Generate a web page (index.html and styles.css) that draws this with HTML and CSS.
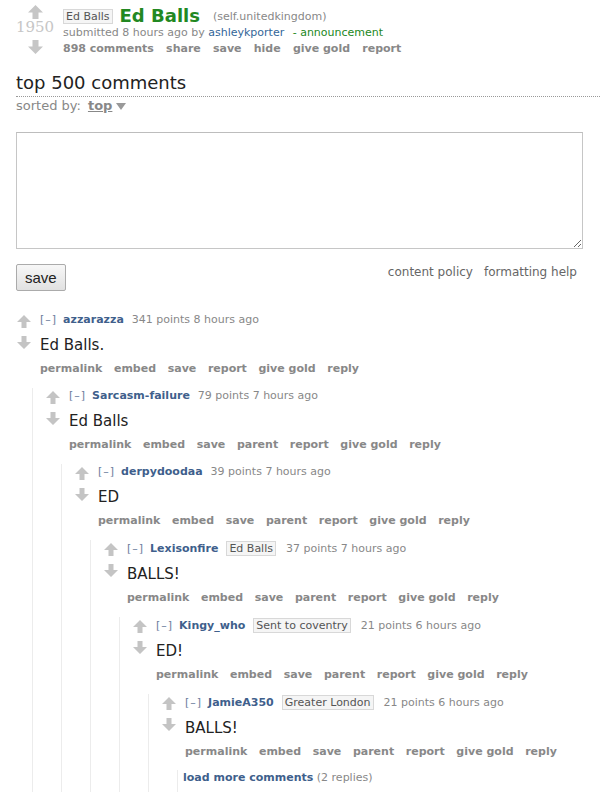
FILE: index.html
```html
<!DOCTYPE html>
<html lang="en">
<head>
<meta charset="utf-8">
<title>Ed Balls : unitedkingdom</title>
<link rel="stylesheet" href="styles.css">
</head>
<body>
<div class="link">
  <div class="midcol">
    <svg class="arrow-lg" viewBox="0 0 15 14"><path d="M7.5 0 L15 7.5 L10.5 7.5 L10.5 14 L4.5 14 L4.5 7.5 L0 7.5 Z"/></svg>
    <div class="score">1950</div>
    <svg class="arrow-lg down" viewBox="0 0 15 14"><path d="M7.5 14 L15 6.5 L10.5 6.5 L10.5 0 L4.5 0 L4.5 6.5 L0 6.5 Z"/></svg>
  </div>
  <div class="entry">
    <p class="title"><span class="flair">Ed Balls</span><a class="title-link" href="#">Ed Balls</a><span class="domain">(self.unitedkingdom)</span></p>
    <p class="tagline">submitted 8 hours ago by <a class="submitter" href="#">ashleykporter</a> <span class="announce">- announcement</span></p>
    <ul class="buttons">
      <li>898 comments</li><li>share</li><li>save</li><li>hide</li><li>give gold</li><li>report</li>
    </ul>
  </div>
</div>

<div class="commentarea">
  <div class="pane-title">top 500 comments</div>
  <div class="menuarea">sorted by: <span class="selected">top</span><span class="dropdown"></span></div>
  <form class="usertext">
    <textarea class="reply-box"></textarea>
    <div class="bottom-area">
      <button type="button" class="save-btn">save</button>
      <div class="help"><a href="#">content policy</a><a href="#">formatting help</a></div>
    </div>
  </form>
</div>

<div class="sitetable">
  <div class="comment">
    <div class="comment-row">
      <div class="midcol">
        <svg class="arrow" viewBox="0 0 14 13"><path d="M7 0 L14 7 L9.5 7 L9.5 13 L4.5 13 L4.5 7 L0 7 Z"/></svg>
        <svg class="arrow" viewBox="0 0 14 13"><path d="M7 13 L14 6 L9.5 6 L9.5 0 L4.5 0 L4.5 6 L0 6 Z"/></svg>
      </div>
      <div class="entry">
        <p class="tagline"><a class="expand" href="#">[–]</a><a class="author" href="#">azzarazza</a><span>341 points 8 hours ago</span></p>
        <div class="md">Ed Balls.</div>
        <ul class="buttons"><li>permalink</li><li>embed</li><li>save</li><li>report</li><li>give gold</li><li>reply</li></ul>
      </div>
    </div>
    <div class="child">
      <div class="comment">
        <div class="comment-row">
          <div class="midcol">
            <svg class="arrow" viewBox="0 0 14 13"><path d="M7 0 L14 7 L9.5 7 L9.5 13 L4.5 13 L4.5 7 L0 7 Z"/></svg>
            <svg class="arrow" viewBox="0 0 14 13"><path d="M7 13 L14 6 L9.5 6 L9.5 0 L4.5 0 L4.5 6 L0 6 Z"/></svg>
          </div>
          <div class="entry">
            <p class="tagline"><a class="expand" href="#">[–]</a><a class="author" href="#">Sarcasm-failure</a><span>79 points 7 hours ago</span></p>
            <div class="md">Ed Balls</div>
            <ul class="buttons"><li>permalink</li><li>embed</li><li>save</li><li>parent</li><li>report</li><li>give gold</li><li>reply</li></ul>
          </div>
        </div>
        <div class="child">
          <div class="comment">
            <div class="comment-row">
              <div class="midcol">
                <svg class="arrow" viewBox="0 0 14 13"><path d="M7 0 L14 7 L9.5 7 L9.5 13 L4.5 13 L4.5 7 L0 7 Z"/></svg>
                <svg class="arrow" viewBox="0 0 14 13"><path d="M7 13 L14 6 L9.5 6 L9.5 0 L4.5 0 L4.5 6 L0 6 Z"/></svg>
              </div>
              <div class="entry">
                <p class="tagline"><a class="expand" href="#">[–]</a><a class="author" href="#">derpydoodaa</a><span>39 points 7 hours ago</span></p>
                <div class="md">ED</div>
                <ul class="buttons"><li>permalink</li><li>embed</li><li>save</li><li>parent</li><li>report</li><li>give gold</li><li>reply</li></ul>
              </div>
            </div>
            <div class="child">
              <div class="comment">
                <div class="comment-row">
                  <div class="midcol">
                    <svg class="arrow" viewBox="0 0 14 13"><path d="M7 0 L14 7 L9.5 7 L9.5 13 L4.5 13 L4.5 7 L0 7 Z"/></svg>
                    <svg class="arrow" viewBox="0 0 14 13"><path d="M7 13 L14 6 L9.5 6 L9.5 0 L4.5 0 L4.5 6 L0 6 Z"/></svg>
                  </div>
                  <div class="entry">
                    <p class="tagline"><a class="expand" href="#">[–]</a><a class="author" href="#">Lexisonfire</a><span class="flair">Ed Balls</span><span>37 points 7 hours ago</span></p>
                    <div class="md">BALLS!</div>
                    <ul class="buttons"><li>permalink</li><li>embed</li><li>save</li><li>parent</li><li>report</li><li>give gold</li><li>reply</li></ul>
                  </div>
                </div>
                <div class="child">
                  <div class="comment">
                    <div class="comment-row">
                      <div class="midcol">
                        <svg class="arrow" viewBox="0 0 14 13"><path d="M7 0 L14 7 L9.5 7 L9.5 13 L4.5 13 L4.5 7 L0 7 Z"/></svg>
                        <svg class="arrow" viewBox="0 0 14 13"><path d="M7 13 L14 6 L9.5 6 L9.5 0 L4.5 0 L4.5 6 L0 6 Z"/></svg>
                      </div>
                      <div class="entry">
                        <p class="tagline"><a class="expand" href="#">[–]</a><a class="author" href="#">Kingy_who</a><span class="flair">Sent to coventry</span><span>21 points 6 hours ago</span></p>
                        <div class="md">ED!</div>
                        <ul class="buttons"><li>permalink</li><li>embed</li><li>save</li><li>parent</li><li>report</li><li>give gold</li><li>reply</li></ul>
                      </div>
                    </div>
                    <div class="child">
                      <div class="comment">
                        <div class="comment-row">
                          <div class="midcol">
                            <svg class="arrow" viewBox="0 0 14 13"><path d="M7 0 L14 7 L9.5 7 L9.5 13 L4.5 13 L4.5 7 L0 7 Z"/></svg>
                            <svg class="arrow" viewBox="0 0 14 13"><path d="M7 13 L14 6 L9.5 6 L9.5 0 L4.5 0 L4.5 6 L0 6 Z"/></svg>
                          </div>
                          <div class="entry">
                            <p class="tagline"><a class="expand" href="#">[–]</a><a class="author" href="#">JamieA350</a><span class="flair">Greater London</span><span>21 points 6 hours ago</span></p>
                            <div class="md">BALLS!</div>
                            <ul class="buttons"><li>permalink</li><li>embed</li><li>save</li><li>parent</li><li>report</li><li>give gold</li><li>reply</li></ul>
                          </div>
                        </div>
                        <div class="child last">
                          <p class="morechildren"><a href="#">load more comments</a> <span>(2 replies)</span></p>
                        </div>
                      </div>
                    </div>
                  </div>
                </div>
              </div>
            </div>
          </div>
        </div>
      </div>
    </div>
  </div>
</div>
</body>
</html>
```

FILE: styles.css
```css
* { box-sizing: border-box; }

body {
  margin: 0;
  background: #fff;
  color: #222;
  font-family: "DejaVu Sans", Verdana, sans-serif;
}

p, ul { margin: 0; padding: 0; }
ul { list-style: none; }
a { text-decoration: none; }

/* ---------- link header ---------- */
.link {
  display: flex;
  padding: 5px 0 0 14px;
}
.link .midcol {
  width: 42px;
  display: flex;
  flex-direction: column;
  align-items: center;
}
.arrow-lg {
  display: block;
  width: 15px;
  height: 14px;
  fill: #c6c6c6;
}
.arrow-lg.down { margin-top: 5px; }
.score {
  font-family: "DejaVu Serif", serif;
  font-size: 15px;
  line-height: 16px;
  color: #c6c6c6;
}
.link .entry {
  margin-left: 7px;
  padding-top: 2px;
}
.title {
  display: flex;
  align-items: center;
  height: 18px;
}
.flair {
  display: inline-block;
  font-size: 11px;
  line-height: 13px;
  padding: 0 2px;
  border: 1px solid #d8d8d8;
  background: #f5f5f5;
  color: #545454;
  font-weight: normal;
}
.title .flair { margin-right: 7px; }
.title-link {
  font-size: 18px;
  line-height: 18px;
  font-weight: bold;
  color: #228822;
}
.domain {
  font-size: 11px;
  color: #888;
  margin-left: 13px;
}
.tagline {
  font-size: 11px;
  line-height: 16px;
  color: #888;
}
.submitter { color: #336699; }
.announce { color: #228822; margin-left: 5px; }

.buttons {
  display: flex;
  gap: 11.6px;
  font-size: 11px;
  line-height: 16px;
  font-weight: bold;
  color: #888;
}
.link .buttons { gap: 12.2px; }

/* ---------- comment area ---------- */
.commentarea { padding-left: 16px; }
.pane-title {
  margin-top: 15px;
  font-size: 18px;
  line-height: 22px;
  padding-bottom: 2px;
  border-bottom: 1px dotted #999;
  color: #222;
}
.menuarea {
  margin-top: 1px;
  font-size: 13px;
  line-height: 16px;
  color: #888;
  display: flex;
  align-items: center;
}
.menuarea .selected {
  margin-left: 7px;
  font-weight: bold;
  text-decoration: underline;
  color: #888;
}
.dropdown {
  width: 0;
  height: 0;
  margin-left: 4px;
  margin-top: 1px;
  border-left: 5.5px solid transparent;
  border-right: 5.5px solid transparent;
  border-top: 7px solid #999;
}
.usertext { margin-top: 18px; }
.reply-box {
  display: block;
  width: 567px;
  height: 117px;
  border: 1px solid #c6c6c6;
  border-top-color: #bdbdbd;
  padding: 2px;
  margin: 0;
  resize: both;
  font-family: "DejaVu Sans", sans-serif;
}
.bottom-area {
  display: flex;
  justify-content: space-between;
  align-items: flex-start;
  width: 567px;
  padding-right: 6px;
  margin-top: 15px;
}
.save-btn {
  height: 27px;
  padding: 0 8px;
  font-family: "Liberation Sans", Arial, sans-serif;
  font-size: 15px;
  color: #222;
  border: 1px solid #ababab;
  border-radius: 2px;
  background: linear-gradient(#f7f7f7, #e1e1e1);
}
.help {
  display: flex;
  gap: 11px;
  font-size: 12px;
  line-height: 17px;
}
.help a { color: #666; }

/* ---------- comments ---------- */
.sitetable {
  margin-top: 21px;
  padding-left: 17px;
}
.comment-row { display: flex; }
.comment .midcol {
  width: 23px;
  flex: none;
  display: flex;
  flex-direction: column;
  gap: 8px;
  padding-top: 3px;
}
.arrow {
  display: block;
  width: 14px;
  height: 13px;
  fill: #c4c4c4;
}
.comment .tagline {
  display: flex;
  align-items: center;
  min-height: 16px;
  white-space: nowrap;
}
.expand { color: #6b7c9c; margin-right: 6px; letter-spacing: 1px; }
.author { color: #3f5f8c; font-weight: bold; margin-right: 8px; }
.comment .tagline .flair { margin: 1px 10px 1px 0; }
.md {
  font-size: 15px;
  line-height: 20px;
  margin: 7px 0 6px;
  color: #222;
}
.child {
  margin: 11px 0 0 15px;
  border-left: 1px solid #ececec;
}
.child > .comment { margin-left: 13px; }
.child.last { padding-bottom: 20px; }
.morechildren {
  margin-left: 5px;
  margin-top: -1px;
  font-size: 11px;
  line-height: 16px;
  color: #888;
}
.morechildren a { color: #3f5f8c; font-weight: bold; }
```
